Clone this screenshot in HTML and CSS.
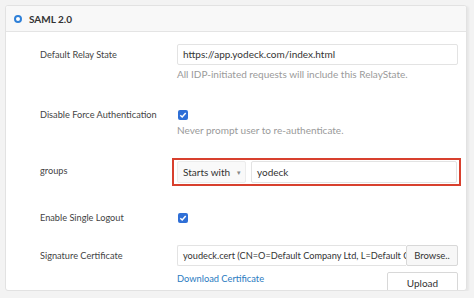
FILE: index.html
```html
<!DOCTYPE html>
<html>
  <head>
    <link rel="stylesheet" href="styles.css">
  </head>
  <body>
    <div class="card">
      <div class="cardHeader">
        <span class="dot"></span>
        <span class="title">SAML 2.0</span>
      </div>
      <div class="cardBody">
        <div class="row" id="relayRow">
          <div class="label">Default Relay State</div>
          <div class="field">
            <div class="textInput">https://app.yodeck.com/index.html</div>
            <div class="help">All IDP-initiated requests will include this RelayState.</div>
          </div>
        </div>
        <div class="row" id="forceRow">
          <div class="label short">Disable Force Authentication</div>
          <div class="field">
            <span class="check"><svg viewBox="0 0 10 10" width="10" height="10"><path d="M2.3 5.2 L4.2 7 L7.7 3" fill="none" stroke="#fff" stroke-width="1.5"/></svg></span>
            <div class="help">Never prompt user to re-authenticate.</div>
          </div>
        </div>
        <div class="row" id="groupsRow">
          <div class="label tall">groups</div>
          <div class="field">
            <div class="highlight">
              <div class="select"><span>Starts with</span><span class="caret">&#9662;</span></div>
              <div class="textInput grow">yodeck</div>
            </div>
          </div>
        </div>
        <div class="row" id="logoutRow">
          <div class="label short">Enable Single Logout</div>
          <div class="field">
            <span class="check"><svg viewBox="0 0 10 10" width="10" height="10"><path d="M2.3 5.2 L4.2 7 L7.7 3" fill="none" stroke="#fff" stroke-width="1.5"/></svg></span>
          </div>
        </div>
        <div class="row" id="certRow">
          <div class="label">Signature Certificate</div>
          <div class="field">
            <div class="fileGroup">
              <div class="textInput grow clip">youdeck.cert (CN=O=Default Company Ltd, L=Default Cit</div>
              <div class="btn browse">Browse..</div>
            </div>
            <div class="certActions">
              <a class="link">Download Certificate</a>
              <div class="btn upload">Upload</div>
            </div>
          </div>
        </div>
      </div>
    </div>
  </body>
</html>
```

FILE: styles.css
```css
body {
  margin: 0;
  padding: 5px 7px 0 5px;
  background-color: #f3f3f3;
  font-family: 'Lato', sans-serif;
  font-size: 10px;
  color: #444444;
}

.card {
  background-color: #ffffff;
  border: 1px solid #e2e2e2;
  border-radius: 3px;
  height: 284px;
  overflow: hidden;
  box-shadow: 2px 1px 2px rgba(0, 0, 0, 0.05);
}

.cardHeader {
  display: flex;
  align-items: center;
  height: 25px;
  padding-left: 8px;
  background-color: #f8f8f8;
  border-bottom: 1px solid #e4e4e4;
}

.dot {
  width: 4px;
  height: 4px;
  border: 2px solid #2f80d8;
  border-radius: 50%;
  background-color: #ffffff;
  margin-right: 7px;
}

.title {
  font-weight: bold;
  font-size: 10px;
  color: #333333;
}

.cardBody {
  padding: 12px 8px 0 34px;
}

.row {
  display: flex;
}

.label {
  width: 137px;
  flex-shrink: 0;
  font-size: 9.2px;
  line-height: 21px;
}

.label.short {
  line-height: 10px;
}

.label.tall {
  line-height: 26px;
}

.field {
  flex: 1;
  min-width: 0;
}

.textInput {
  height: 19px;
  line-height: 19px;
  border: 1px solid #e3e3e3;
  border-radius: 2px;
  padding: 0 5px;
  color: #333333;
  white-space: nowrap;
}

.grow {
  flex: 1;
  min-width: 0;
}

.clip {
  overflow: hidden;
  font-size: 9.2px;
  padding-right: 2px;
}

.help {
  color: #9a9a9a;
  line-height: 12px;
  margin-top: 3px;
}

#forceRow {
  margin-top: 30px;
}

#forceRow .help {
  margin-top: 4px;
}

#groupsRow {
  margin-top: 22px;
}

#logoutRow {
  margin-top: 27px;
}

#certRow {
  margin-top: 22px;
}

.check {
  display: block;
  width: 10px;
  height: 10px;
  margin-left: 1px;
  border-radius: 2px;
  background-color: #2f6fd6;
}

.check svg {
  display: block;
}

.highlight {
  display: flex;
  gap: 5px;
  margin-left: -5px;
  margin-right: -3px;
  padding: 1px 2px 1px 3px;
  border: 2px solid #d8402e;
}

.select {
  display: flex;
  justify-content: space-between;
  width: 58px;
  height: 20px;
  line-height: 20px;
  padding: 0 4px 0 5px;
  border: 1px solid #ececec;
  border-radius: 2px;
  background-color: #f9f9f9;
  color: #333333;
  white-space: nowrap;
}

.caret {
  font-size: 7px;
  color: #888888;
}

.highlight .textInput {
  height: 20px;
  line-height: 20px;
}

.fileGroup {
  display: flex;
}

.fileGroup .textInput {
  border-right: none;
  border-radius: 2px 0 0 2px;
}

.btn {
  border: 1px solid #d8d8d8;
  border-radius: 2px;
  background-color: #f7f7f7;
  text-align: center;
  color: #333333;
}

.browse {
  width: 50px;
  height: 19px;
  line-height: 19px;
  font-size: 9.5px;
}

.certActions {
  display: flex;
  justify-content: space-between;
  align-items: flex-start;
}

.link {
  color: #2a7bbf;
  font-size: 9.3px;
  line-height: 12px;
  margin-top: 7px;
}

.upload {
  width: 69px;
  height: 20px;
  line-height: 20px;
  margin-top: 6px;
  background-color: #ffffff;
}
```
